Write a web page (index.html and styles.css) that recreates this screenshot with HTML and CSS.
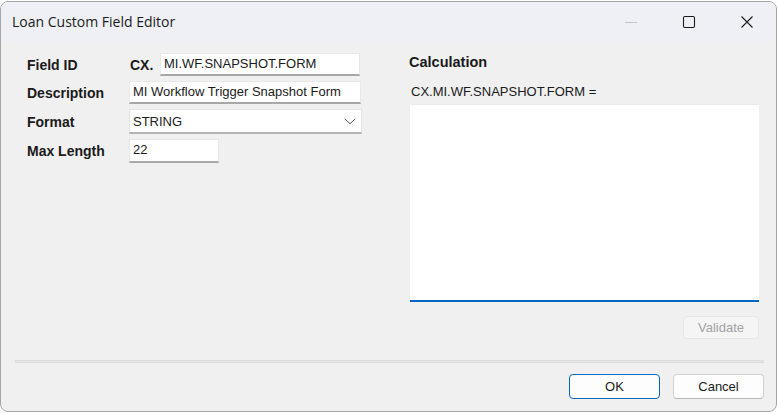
FILE: index.html
```html
<!DOCTYPE html>
<html>
<head>
<meta charset="utf-8">
<title>Loan Custom Field Editor</title>
<link rel="stylesheet" href="styles.css">
</head>
<body>
<div class="window">
  <div class="titlebar">
    <span class="title">Loan Custom Field Editor</span>
    <div class="controls">
      <span class="ctl"><svg width="14" height="14" viewBox="0 0 14 14"><path d="M1 7.5h12" stroke="#c4c4c4" stroke-width="1"/></svg></span>
      <span class="ctl"><svg width="14" height="14" viewBox="0 0 14 14"><rect x="1.5" y="1.5" width="11" height="11" rx="1.5" fill="none" stroke="#1b1b1b" stroke-width="1.1"/></svg></span>
      <span class="ctl"><svg width="14" height="14" viewBox="0 0 14 14"><path d="M1.5 1.5l11 11M12.5 1.5l-11 11" stroke="#1b1b1b" stroke-width="1.1"/></svg></span>
    </div>
  </div>
  <div class="body">
    <div class="main">
      <div class="form">
        <span class="label">Field ID</span>
        <div class="field-id">
          <span class="prefix">CX.</span>
          <div class="textbox w-id">MI.WF.SNAPSHOT.FORM</div>
        </div>
        <span class="label">Description</span>
        <div class="textbox w-desc">MI Workflow Trigger Snapshot Form</div>
        <span class="label">Format</span>
        <div class="select">
          <span>STRING</span>
          <svg width="12" height="7" viewBox="0 0 12 7"><path d="M0.8 0.8l5.2 5 5.2-5" fill="none" stroke="#5a5a5a" stroke-width="1"/></svg>
        </div>
        <span class="label">Max Length</span>
        <div class="textbox w-len">22</div>
      </div>
      <div class="calc">
        <div class="calc-title">Calculation</div>
        <div class="calc-expr">CX.MI.WF.SNAPSHOT.FORM =</div>
        <div class="calc-area"></div>
        <div class="btn validate">Validate</div>
      </div>
    </div>
    <div class="sep"></div>
    <div class="buttons">
      <div class="btn ok">OK</div>
      <div class="btn">Cancel</div>
    </div>
  </div>
</div>
</body>
</html>
```

FILE: styles.css
```css
html, body {
  margin: 0;
  padding: 0;
  background: #ffffff;
}

.window {
  width: 777px;
  height: 411px;
  margin-top: 1px;
  box-sizing: border-box;
  border: 1px solid #a6a6a6;
  border-radius: 8px;
  background: #f0f0f0;
  overflow: hidden;
  display: flex;
  flex-direction: column;
  font-family: "Liberation Sans", Arial, sans-serif;
  color: #1a1a1a;
}

.titlebar {
  flex: none;
  height: 39px;
  background: #eef0f5;
  display: flex;
  align-items: center;
}

.title {
  flex: 1;
  padding-left: 11px;
  font-family: "Open Sans", "Noto Sans", sans-serif;
  font-size: 14px;
  color: #1b1b1b;
}

.controls {
  display: flex;
  align-self: stretch;
}

.ctl {
  width: 58px;
  display: flex;
  align-items: center;
  justify-content: center;
}

.body {
  flex: 1;
  display: flex;
  flex-direction: column;
}

.main {
  display: flex;
  align-items: flex-start;
  padding-left: 26px;
}

.form {
  margin-top: 12px;
  display: grid;
  grid-template-columns: 102px 234px;
  row-gap: 5px;
  align-items: center;
}

.label {
  font-weight: bold;
  font-size: 14px;
  color: #1a1a1a;
}

.field-id {
  display: flex;
  align-items: center;
}

.prefix {
  width: 30px;
  padding-left: 1px;
  font-weight: bold;
  font-size: 14px;
}

.textbox {
  height: 23px;
  box-sizing: border-box;
  background: #ffffff;
  border: 1px solid #e8e8e8;
  border-bottom: 2px solid #a8a8a8;
  font-size: 13px;
  line-height: 20px;
  padding: 0 3px;
  white-space: nowrap;
  overflow: hidden;
}

.w-id { width: 200px; }
.w-desc { width: 232px; }
.w-len { width: 90px; height: 24px; }

.select {
  width: 233px;
  height: 25px;
  box-sizing: border-box;
  background: #ffffff;
  border: 1px solid #e4e4e4;
  border-bottom: 2px solid #b4b4b4;
  font-size: 13px;
  padding: 0 5px 0 3px;
  display: flex;
  align-items: center;
  justify-content: space-between;
}

.calc {
  margin-left: 46px;
  width: 350px;
  display: flex;
  flex-direction: column;
}

.calc-title {
  margin-top: 13px;
  font-weight: bold;
  font-size: 14.5px;
  line-height: 17px;
}

.calc-expr {
  margin-top: 13px;
  padding-left: 2px;
  font-size: 13px;
  line-height: 15px;
}

.calc-area {
  margin-top: 5px;
  margin-left: 1px;
  height: 198px;
  box-sizing: border-box;
  background: #ffffff;
  border-top: 1px solid #ebebeb;
  border-bottom: 2px solid #0067c0;
}

.btn {
  width: 91px;
  height: 25px;
  box-sizing: border-box;
  border: 1px solid #d0d0d0;
  border-bottom-color: #b8b8b8;
  border-radius: 4px;
  background: #fdfdfd;
  font-size: 13px;
  display: flex;
  align-items: center;
  justify-content: center;
  color: #1a1a1a;
}

.validate {
  align-self: flex-end;
  width: 76px;
  height: 23px;
  margin-top: 14px;
  background: #f5f5f5;
  border-color: #e6e6e6;
  color: #a2a2a2;
}

.sep {
  height: 3px;
  box-sizing: border-box;
  margin: 21px 12px 0 14px;
  background: #e6e6e6;
  border: 1px solid #dcdcdc;
}

.buttons {
  display: flex;
  justify-content: flex-end;
  gap: 13px;
  margin-top: 11px;
  padding-right: 12px;
}

.ok {
  border: 1px solid #0067c0;
}
```
